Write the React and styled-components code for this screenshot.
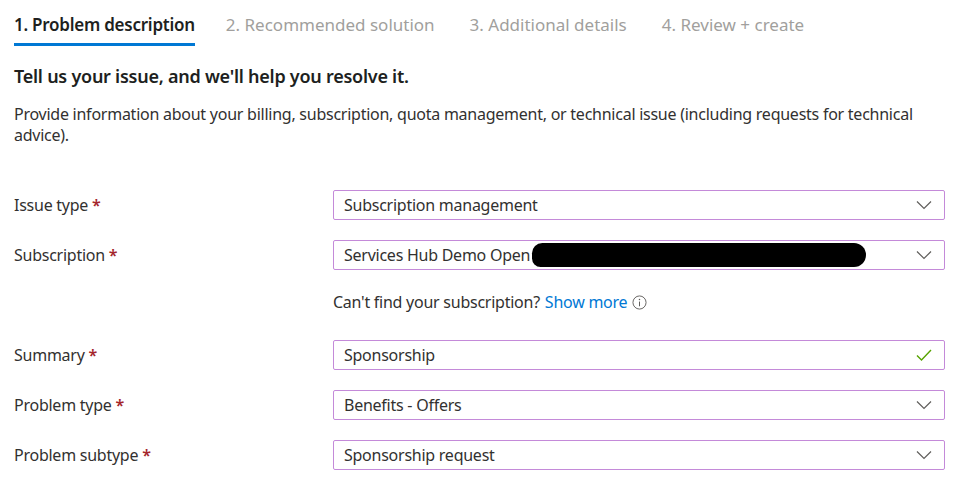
import styled, { createGlobalStyle } from 'styled-components';

const GlobalStyle = createGlobalStyle`
	html, body {
		margin: 0;
		padding: 0;
		background: #ffffff;
	}
	body {
		font-family: 'Segoe UI', 'Noto Sans', sans-serif;
		color: #323130;
		letter-spacing: -0.25px;
	}
`;

const tabs = [
	'1. Problem description',
	'2. Recommended solution',
	'3. Additional details',
	'4. Review + create',
];

const fields = [
	{ label: 'Issue type', value: 'Subscription management', icon: 'chevron' },
	{ label: 'Subscription', value: 'Services Hub Demo Open', icon: 'chevron', redacted: true },
	{ help: true },
	{ label: 'Summary', value: 'Sponsorship', icon: 'check' },
	{ label: 'Problem type', value: 'Benefits - Offers', icon: 'chevron' },
	{ label: 'Problem subtype', value: 'Sponsorship request', icon: 'chevron' },
];

const Chevron = () => (
	<svg width='16' height='10' viewBox='0 0 16 10'>
		<path d='M1 1.5 L8 8.5 L15 1.5' fill='none' stroke='#605e5c' strokeWidth='1.2' />
	</svg>
);

const Check = () => (
	<svg width='16' height='12' viewBox='0 0 16 12'>
		<path d='M1 6.5 L5.5 11 L15 1' fill='none' stroke='#57a300' strokeWidth='1.4' />
	</svg>
);

const InfoIcon = () => (
	<svg width='15' height='15' viewBox='0 0 16 16'>
		<circle cx='8' cy='8' r='7' fill='none' stroke='#605e5c' strokeWidth='1' />
		<path d='M8 7 V12' stroke='#605e5c' strokeWidth='1.1' />
		<circle cx='8' cy='4.8' r='0.8' fill='#605e5c' />
	</svg>
);

const App = () => {
	return (
		<>
			<GlobalStyle />
			<Page>
				<TabBar>
					{tabs.map((t, i) => (
						<Tab key={t} $active={i === 0}>
							{t}
						</Tab>
					))}
				</TabBar>

				<Heading>Tell us your issue, and we'll help you resolve it.</Heading>
				<Intro>
					Provide information about your billing, subscription, quota management, or technical
					issue (including requests for technical advice).
				</Intro>

				<Form>
					{fields.map((f, i) =>
						f.help ? (
							<Row key={i}>
								<span />
								<HelpText>
									Can't find your subscription?<LinkText>Show more</LinkText>
									<InfoIcon />
								</HelpText>
							</Row>
						) : (
							<Row key={i}>
								<Label>
									{f.label} <Required>*</Required>
								</Label>
								<Field>
									<FieldValue>
										{f.value}
										{f.redacted && <Redaction />}
									</FieldValue>
									<IconSlot>{f.icon === 'check' ? <Check /> : <Chevron />}</IconSlot>
								</Field>
							</Row>
						)
					)}
				</Form>
			</Page>
		</>
	);
};

const Page = styled.div`
	padding: 0 15px 0 14px;
	width: 960px;
	box-sizing: border-box;
`;

const TabBar = styled.div`
	display: flex;
	gap: 35px;
	height: 46px;
`;

const Tab = styled.div`
	font-size: 17px;
	height: 43px;
	line-height: 49px;
	color: ${props => (props.$active ? '#201f1e' : '#a19f9d')};
	font-weight: ${props => (props.$active ? 600 : 400)};
	letter-spacing: ${props => (props.$active ? '-0.25px' : '0')};
	border-bottom: 3px solid ${props => (props.$active ? '#0078d4' : 'transparent')};
	white-space: nowrap;

	&:first-child {
		margin-right: -4px;
	}
`;

const Heading = styled.h2`
	margin: 18px 0 0;
	font-size: 18px;
	font-weight: 600;
	color: #201f1e;
	line-height: 24px;
`;

const Intro = styled.p`
	margin: 16px 0 0;
	font-size: 16px;
	line-height: 21px;
	color: #323130;
	width: 925px;
`;

const Form = styled.div`
	display: flex;
	flex-direction: column;
	gap: 20px;
	margin-top: 44px;
`;

const Row = styled.div`
	display: grid;
	grid-template-columns: 319px 612px;
	align-items: center;
	height: 30px;
`;

const Label = styled.div`
	font-size: 16px;
	color: #323130;
`;

const Required = styled.span`
	color: #a4262c;
	font-weight: 600;
`;

const Field = styled.div`
	display: flex;
	align-items: center;
	justify-content: space-between;
	height: 30px;
	box-sizing: border-box;
	border: 1.5px solid #c48ad9;
	border-radius: 2px;
	padding: 0 12px 0 10px;
	background: #ffffff;
`;

const FieldValue = styled.div`
	display: flex;
	align-items: center;
	font-size: 16px;
	color: #323130;
	white-space: nowrap;
`;

const Redaction = styled.span`
	display: inline-block;
	width: 334px;
	height: 24px;
	margin-left: 2px;
	background: #000000;
	border-radius: 12px 14px 14px 10px;
`;

const IconSlot = styled.span`
	display: flex;
	align-items: center;
`;

const HelpText = styled.div`
	display: flex;
	align-items: center;
	align-self: start;
	height: 24px;
	gap: 5px;
	font-size: 16px;
	color: #323130;
	white-space: nowrap;
`;

const LinkText = styled.span`
	color: #0078d4;
`;

export default App;
